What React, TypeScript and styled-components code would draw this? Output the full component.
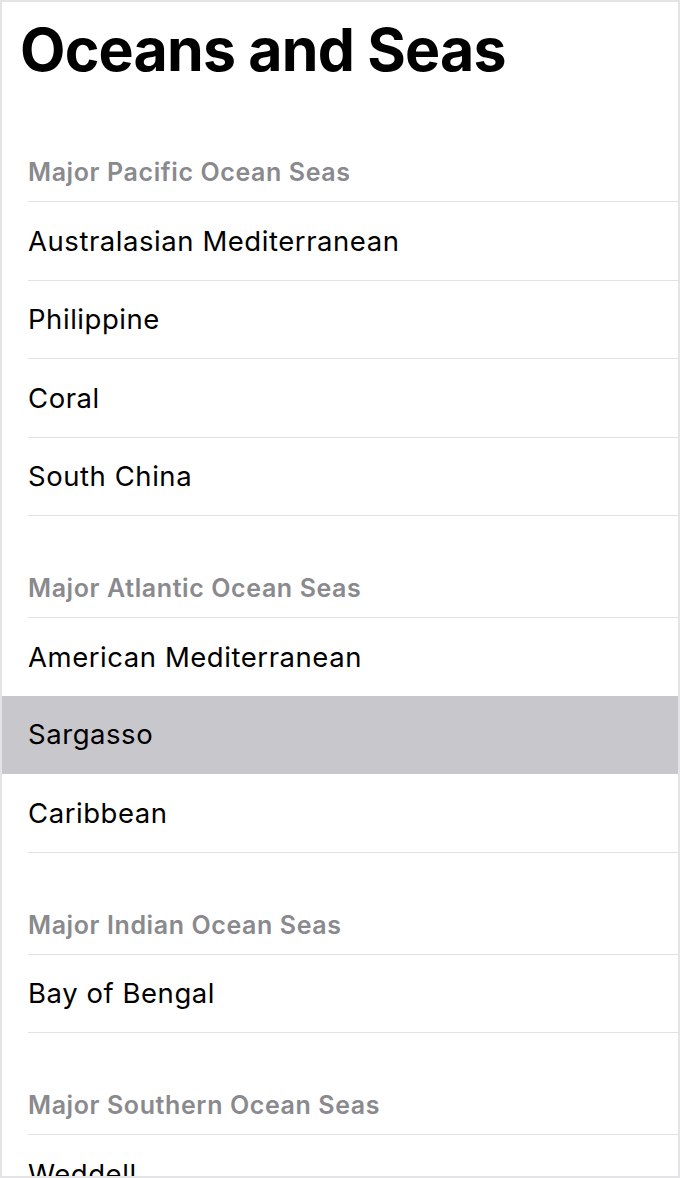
import React from 'react';
import styled, { createGlobalStyle } from 'styled-components';

const GlobalStyle = createGlobalStyle`
  html, body {
    margin: 0;
    padding: 0;
    background: #ffffff;
  }
  * {
    box-sizing: border-box;
  }
`

const Frame = styled.div`
  width: 680px;
  height: 1178px;
  overflow: hidden;
  border: 2px solid #e4e4e6;
  background: #ffffff;
  font-family: Inter, "Liberation Sans", sans-serif;
  color: #000000;
`
const Title = styled.h1`
  margin: 0;
  height: 98px;
  padding: 16px 0 0 18px;
  font-size: 59px;
  line-height: 64px;
  font-weight: 700;
  letter-spacing: -0.8px;
`
const Section = styled.section`
  display: flex;
  flex-direction: column;
`
const SectionHeader = styled.div`
  display: flex;
  align-items: flex-end;
  height: 102px;
  margin-left: 26px;
  padding-bottom: 15px;
  border-bottom: 1px solid #e2e2e4;
  font-size: 25px;
  line-height: 28px;
  font-weight: 600;
  color: #8a8a8e;
  letter-spacing: 0.6px;
`
const Row = styled.div<{ $selected?: boolean }>`
  display: flex;
  align-items: center;
  height: 78.5px;
  padding-left: 26px;
  margin-top: ${p => (p.$selected ? '-1px' : '0')};
  background: ${p => (p.$selected ? '#c7c7cc' : 'transparent')};
  font-size: 27.5px;
  line-height: 34px;
  font-weight: 400;
  letter-spacing: 0.55px;
`
const RowLabel = styled.span<{ $plain?: boolean }>`
  flex: 1;
  height: 100%;
  display: flex;
  align-items: center;
  border-bottom: 1px solid ${p => (p.$plain ? 'transparent' : '#e2e2e4')};
`

const sections = [
  {
    title: 'Major Pacific Ocean Seas',
    seas: ['Australasian Mediterranean', 'Philippine', 'Coral', 'South China'],
  },
  {
    title: 'Major Atlantic Ocean Seas',
    seas: ['American Mediterranean', 'Sargasso', 'Caribbean'],
  },
  {
    title: 'Major Indian Ocean Seas',
    seas: ['Bay of Bengal'],
  },
  {
    title: 'Major Southern Ocean Seas',
    seas: ['Weddell'],
  },
];

const selected = 'Sargasso';

function App() {
  return (
    <>
      <GlobalStyle />
      <Frame>
        <Title>Oceans and Seas</Title>
        {sections.map(section => (
          <Section key={section.title}>
            <SectionHeader>{section.title}</SectionHeader>
            {section.seas.map(sea => (
              <Row key={sea} $selected={sea === selected}>
                <RowLabel $plain={sea === selected}>{sea}</RowLabel>
              </Row>
            ))}
          </Section>
        ))}
      </Frame>
    </>
  );
}

export default App;
